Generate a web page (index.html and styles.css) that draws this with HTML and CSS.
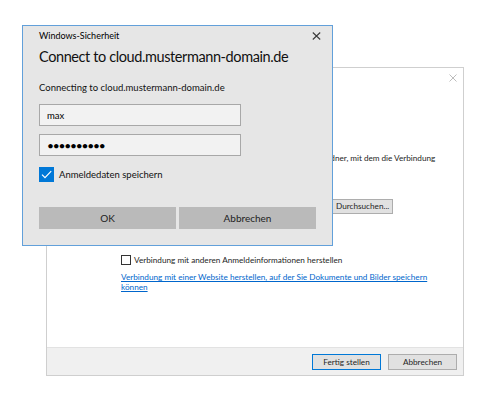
FILE: index.html
```html
<!DOCTYPE html>
<html lang="de">
<head>
<meta charset="utf-8">
<title>Windows-Sicherheit</title>
<link rel="stylesheet" href="styles.css">
</head>
<body>
<div class="window">
  <div class="win-bar">
    <svg class="win-close" width="8" height="8" viewBox="0 0 8 8"><path d="M0.5 0.5 L7.5 7.5 M7.5 0.5 L0.5 7.5" stroke="#bdbdbd" stroke-width="1" fill="none"/></svg>
  </div>
  <div class="win-content">
    <h2 class="win-heading">Netzlaufwerk verbinden</h2>
    <p class="win-desc">Geben Sie den Laufwerkbuchstaben und außerdem den Ordner, mit dem die Verbindung</p>
    <div class="win-row first">
      <span class="win-label">Laufwerk:</span>
      <span class="win-select">Z:</span>
    </div>
    <div class="win-row">
      <span class="win-label">Ordner:</span>
      <span class="win-field">https://cloud.mustermann-domain.de</span>
      <button class="win-btn">Durchsuchen...</button>
    </div>
    <p class="win-example">Beispiel: \\Server\Freigabe</p>
    <label class="win-check first"><span class="box checked"></span>Verbindung bei Anmeldung wiederherstellen</label>
    <label class="win-check"><span class="box"></span>Verbindung mit anderen Anmeldeinformationen herstellen</label>
    <a class="win-link" href="#">Verbindung mit einer Website herstellen, auf der Sie Dokumente und Bilder speichern können</a>
  </div>
  <div class="win-footer">
    <button class="win-btn foot primary">Fertig stellen</button>
    <button class="win-btn foot">Abbrechen</button>
  </div>
</div>

<div class="dialog">
  <div class="dlg-bar">
    <span class="dlg-caption">Windows-Sicherheit</span>
    <svg class="dlg-close" width="9" height="8" viewBox="0 0 9 8"><path d="M0.8 0.5 L8.2 7.5 M8.2 0.5 L0.8 7.5" stroke="#3a3a3a" stroke-width="1.1" fill="none"/></svg>
  </div>
  <h1 class="dlg-title">Connect to cloud.mustermann-domain.de</h1>
  <p class="dlg-text">Connecting to cloud.mustermann-domain.de</p>
  <input class="dlg-input" type="text" value="max">
  <input class="dlg-input pw" type="password" value="xxxxxxxxxx">
  <label class="dlg-check">
    <span class="dlg-box"><svg width="15" height="15" viewBox="0 0 15 15"><path d="M3 7.6 L6 10.6 L12.2 4.2" stroke="#fff" stroke-width="1.2" fill="none"/></svg></span>
    Anmeldedaten speichern
  </label>
  <div class="dlg-buttons">
    <button class="dlg-btn">OK</button>
    <button class="dlg-btn">Abbrechen</button>
  </div>
</div>
</body>
</html>
```
FILE: styles.css
```css
html, body {
  margin: 0;
  padding: 0;
}
body {
  width: 480px;
  height: 396px;
  background: #ffffff;
  position: relative;
  overflow: hidden;
  font-family: Lato, "Noto Sans", "Liberation Sans", sans-serif;
  color: #000;
}

/* background wizard window */
.window {
  position: absolute;
  left: 46px;
  top: 67px;
  width: 416px;
  height: 307px;
  border: 1px solid #cfcfcf;
  background: #fff;
  display: flex;
  flex-direction: column;
}
.win-bar {
  height: 20px;
  flex-shrink: 0;
  display: flex;
  justify-content: flex-end;
  align-items: center;
  padding-right: 6px;
}
.win-content {
  flex: 1;
  padding-left: 74px;
  font-size: 8.2px;
  color: #1e1e1e;
}
.win-heading {
  margin: 10px 0 0;
  font-size: 12px;
  line-height: 16px;
  font-weight: normal;
  color: #1e3287;
}
.win-desc {
  margin: 39px 0 0;
  line-height: 11px;
  white-space: nowrap;
  word-spacing: -0.15px;
}
.win-row {
  display: flex;
  align-items: center;
  gap: 6px;
  height: 16px;
  margin-top: 3px;
}
.win-row.first { margin-top: 15px; }
.win-label { width: 48px; }
.win-select, .win-field {
  box-sizing: border-box;
  border: 1px solid #aaa;
  height: 15px;
  line-height: 13px;
  padding: 0 4px;
}
.win-field { width: 151px; overflow: hidden; white-space: nowrap; }
.win-btn {
  font-family: inherit;
  font-size: 8.2px;
  color: #1e1e1e;
  background: #e1e1e1;
  border: 1px solid #adadad;
  height: 15px;
  padding: 0 3px;
  line-height: 12px;
}
.win-example { margin: 2px 0 0; line-height: 11px; }
.win-check {
  display: flex;
  align-items: center;
  gap: 3px;
  height: 12px;
  margin-top: 7px;
}
.win-check.first { margin-top: 8px; }
.box {
  width: 8px;
  height: 8px;
  border: 1px solid #333;
  background: #fff;
}
.box.checked { background: #0078d7; border-color: #0078d7; }
.win-link {
  display: block;
  margin-top: 6px;
  width: 312px;
  line-height: 10px;
  color: #0066cc;
  text-decoration: underline;
}
.win-footer {
  flex-shrink: 0;
  height: 27px;
  background: #f0f0f0;
  border-top: 1px solid #e2e2e2;
  display: flex;
  justify-content: flex-end;
  align-items: center;
  gap: 7px;
  padding-right: 6px;
}
.win-btn.foot {
  width: 69px;
  height: 16px;
}
.win-btn.primary { border-color: #0078d7; }

/* security dialog */
.dialog {
  position: absolute;
  left: 22px;
  top: 25px;
  width: 277px;
  height: 219px;
  padding: 0 16px;
  background: #e6e6e6;
  border: 1px solid #62a0da;
  display: flex;
  flex-direction: column;
}
.dlg-bar {
  display: flex;
  justify-content: space-between;
  align-items: center;
  height: 20px;
}
.dlg-caption {
  font-size: 9px;
  line-height: 20px;
}
.dlg-close { margin-right: -5px; }
.dlg-title {
  margin: 1px 0 0;
  font-size: 14.5px;
  letter-spacing: -0.4px;
  font-weight: normal;
  line-height: 20px;
  white-space: nowrap;
  color: #111;
}
.dlg-text {
  margin: 14px 0 0;
  font-size: 9.5px;
  line-height: 13px;
  color: #111;
}
.dlg-input {
  box-sizing: border-box;
  width: 202px;
  height: 22px;
  border: 1px solid #a8a8a8;
  background: #f2f2f2;
  font-family: inherit;
  font-size: 9.5px;
  padding: 0 7px;
  margin: 10px 0 0;
  outline: none;
  color: #000;
}
.dlg-input.pw {
  margin-top: 8px;
  font-size: 12px;
  letter-spacing: -1.2px;
}
.dlg-check {
  display: flex;
  align-items: center;
  gap: 5px;
  height: 15px;
  margin-top: 11px;
  font-size: 9.5px;
  color: #111;
}
.dlg-box {
  width: 15px;
  height: 15px;
  background: #0078d7;
  display: block;
}
.dlg-box svg { display: block; }
.dlg-buttons {
  display: flex;
  gap: 3px;
  margin-top: 25px;
}
.dlg-btn {
  flex: 1;
  height: 22px;
  border: none;
  background: #bababa;
  font-family: inherit;
  font-size: 10px;
  color: #222;
}
```
